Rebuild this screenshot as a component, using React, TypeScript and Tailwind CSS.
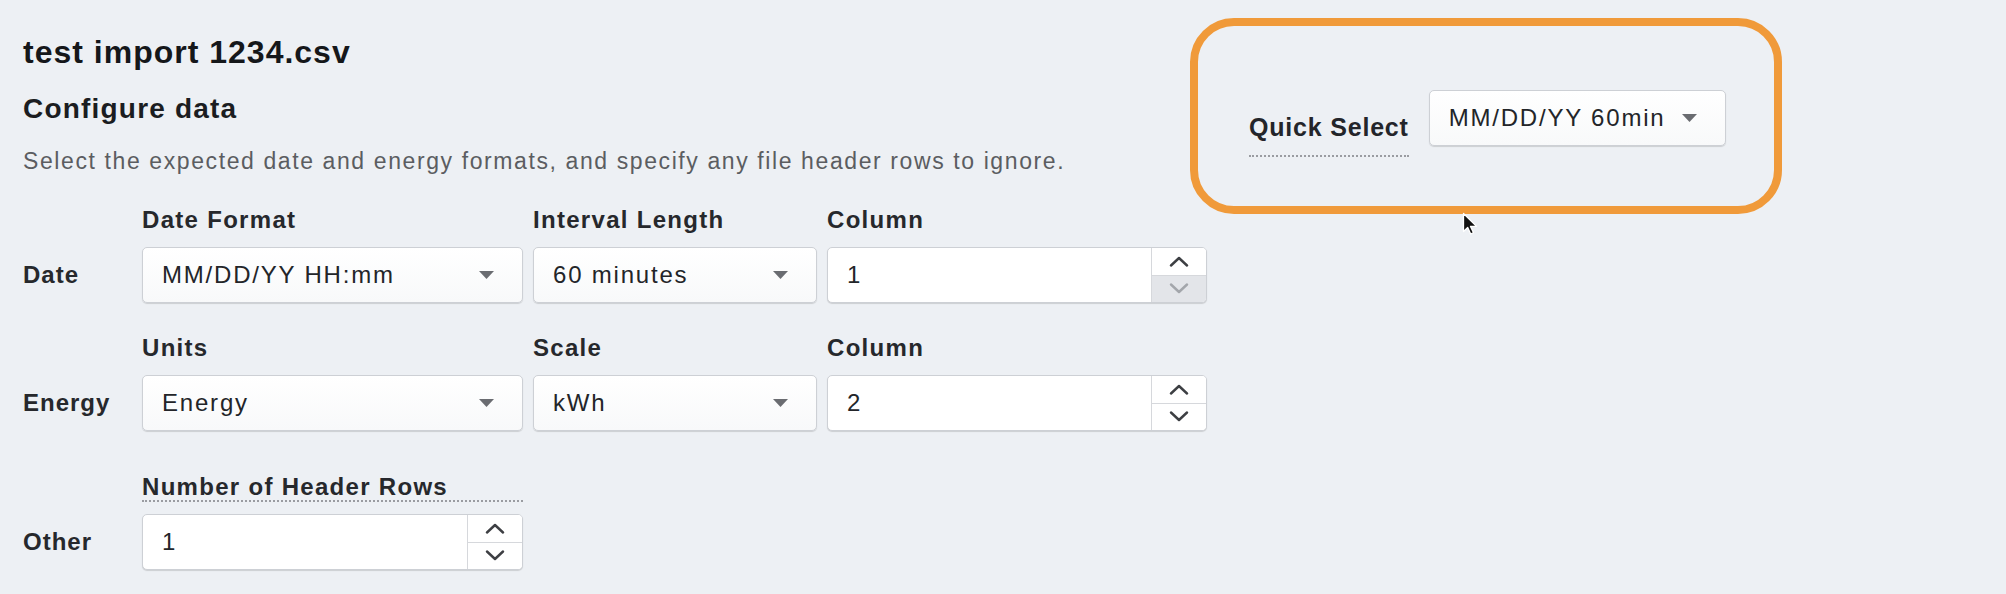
import React from 'react';

const Caret = () => (
  <svg width="15" height="8" viewBox="0 0 15 8" aria-hidden="true">
    <path d="M0 0h15L7.5 8z" fill="#6a6c71" />
  </svg>
);

const Chevron = ({ dir, dim }: { dir: 'up' | 'down'; dim?: boolean }) => (
  <svg width="20" height="11" viewBox="0 0 20 11" aria-hidden="true">
    <path
      d={dir === 'up' ? 'M2 9.5L10 2l8 7.5' : 'M2 1.5L10 9l8-7.5'}
      fill="none"
      stroke={dim ? '#a3a6ab' : '#3d3f43'}
      strokeWidth={2.4}
      strokeLinecap="round"
      strokeLinejoin="round"
    />
  </svg>
);

interface SelectBoxProps {
  value: string;
  className: string;
}

const SelectBox: React.FC<SelectBoxProps> = ({ value, className }) => (
  <div
    className={`${className} h-[56px] flex items-center justify-between pl-[19px] pr-[28px] bg-linear-to-b from-white to-[#f8f9fa] border border-[#cdd0d5] rounded-[5px] shadow-[0_1px_1px_rgba(0,0,0,0.14)] text-[24px] tracking-[1.8px] text-[#232529]`}
  >
    <span>{value}</span>
    <Caret />
  </div>
);

interface NumberBoxProps {
  value: string;
  className: string;
  dimDown?: boolean;
}

const NumberBox: React.FC<NumberBoxProps> = ({ value, className, dimDown }) => (
  <div
    className={`${className} h-[56px] flex bg-white border border-[#cdd0d5] rounded-[5px] shadow-[0_1px_1px_rgba(0,0,0,0.14)] overflow-hidden`}
  >
    <div className="flex-1 flex items-center pl-[19px] text-[24px] text-[#232529]">{value}</div>
    <div className="w-[55px] flex flex-col border-l border-[#d6d8dc]">
      <div className="flex-1 flex items-center justify-center border-b border-[#d6d8dc] bg-white">
        <Chevron dir="up" />
      </div>
      <div className={`flex-1 flex items-center justify-center ${dimDown ? 'bg-[#e3e5e9]' : 'bg-white'}`}>
        <Chevron dir="down" dim={dimDown} />
      </div>
    </div>
  </div>
);

const FieldLabel = ({ children }: { children: React.ReactNode }) => (
  <div className="h-[24px] text-[24px] leading-[24px] font-bold tracking-[1.3px] text-[#26282c] mb-[15px]">
    {children}
  </div>
);

const RowLabel = ({ children }: { children: React.ReactNode }) => (
  <div className="w-[119px] h-[56px] self-end flex items-center text-[24px] font-bold tracking-[1px] text-[#26282c]">
    {children}
  </div>
);

export default function App() {
  return (
    <div className="relative w-full h-[594px] overflow-hidden bg-[#edf0f4] font-['Liberation_Sans',Arial,sans-serif]">
      <div className="flex items-start pl-[23px]">
        <div className="w-[1184px] flex flex-col">
          <h1 className="mt-[36px] text-[32px] leading-[32px] font-bold tracking-[1px] text-[#15171a]">
            test import 1234.csv
          </h1>
          <h2 className="mt-[27px] text-[28px] leading-[28px] font-bold tracking-[1.2px] text-[#1b1d21]">
            Configure data
          </h2>
          <p className="mt-[27px] text-[23px] leading-[23px] tracking-[1.6px] text-[#5b5d61]">
            Select the expected date and energy formats, and specify any file header rows to ignore.
          </p>

          <div className="mt-[35px] flex">
            <RowLabel>Date</RowLabel>
            <div className="flex gap-[10px]">
              <div>
                <FieldLabel>Date Format</FieldLabel>
                <SelectBox className="w-[381px]" value="MM/DD/YY HH:mm" />
              </div>
              <div>
                <FieldLabel>Interval Length</FieldLabel>
                <SelectBox className="w-[284px]" value="60 minutes" />
              </div>
              <div>
                <FieldLabel>Column</FieldLabel>
                <NumberBox className="w-[380px]" value="1" dimDown />
              </div>
            </div>
          </div>

          <div className="mt-[33px] flex">
            <RowLabel>Energy</RowLabel>
            <div className="flex gap-[10px]">
              <div>
                <FieldLabel>Units</FieldLabel>
                <SelectBox className="w-[381px]" value="Energy" />
              </div>
              <div>
                <FieldLabel>Scale</FieldLabel>
                <SelectBox className="w-[284px]" value="kWh" />
              </div>
              <div>
                <FieldLabel>Column</FieldLabel>
                <NumberBox className="w-[380px]" value="2" />
              </div>
            </div>
          </div>

          <div className="mt-[44px] flex">
            <RowLabel>Other</RowLabel>
            <div className="w-[381px]">
              <div className="h-[27px] text-[24px] leading-[24px] font-bold tracking-[1.3px] text-[#26282c] border-b-2 border-dotted border-[#9a9ca1] mb-[12px]">
                Number of Header Rows
              </div>
              <NumberBox className="w-[381px]" value="1" />
            </div>
          </div>
        </div>

        <div className="ml-[42px] mt-[90px] flex items-start gap-[20px]">
          <div className="mt-[25px] pb-[15px] text-[25px] leading-[25px] font-bold tracking-[0.8px] text-[#23252a] border-b-2 border-dotted border-[#9a9ca1]">
            Quick Select
          </div>
          <SelectBox className="w-[297px]" value="MM/DD/YY 60min" />
        </div>
      </div>

      {/* highlight annotation */}
      <div className="absolute left-[1190px] top-[18px] w-[592px] h-[196px] border-[8px] border-[#f09a3a] rounded-[44px] pointer-events-none" />

      {/* mouse pointer */}
      <svg className="absolute left-[1462px] top-[212px]" width="16" height="24" viewBox="0 0 16 24" aria-hidden="true">
        <path d="M1.5 1.5v18l4.2-4 3 6.5 2.8-1.3-3-6.3h6z" fill="#111" stroke="#fff" strokeWidth="1.3" strokeLinejoin="round" />
      </svg>
    </div>
  );
}
